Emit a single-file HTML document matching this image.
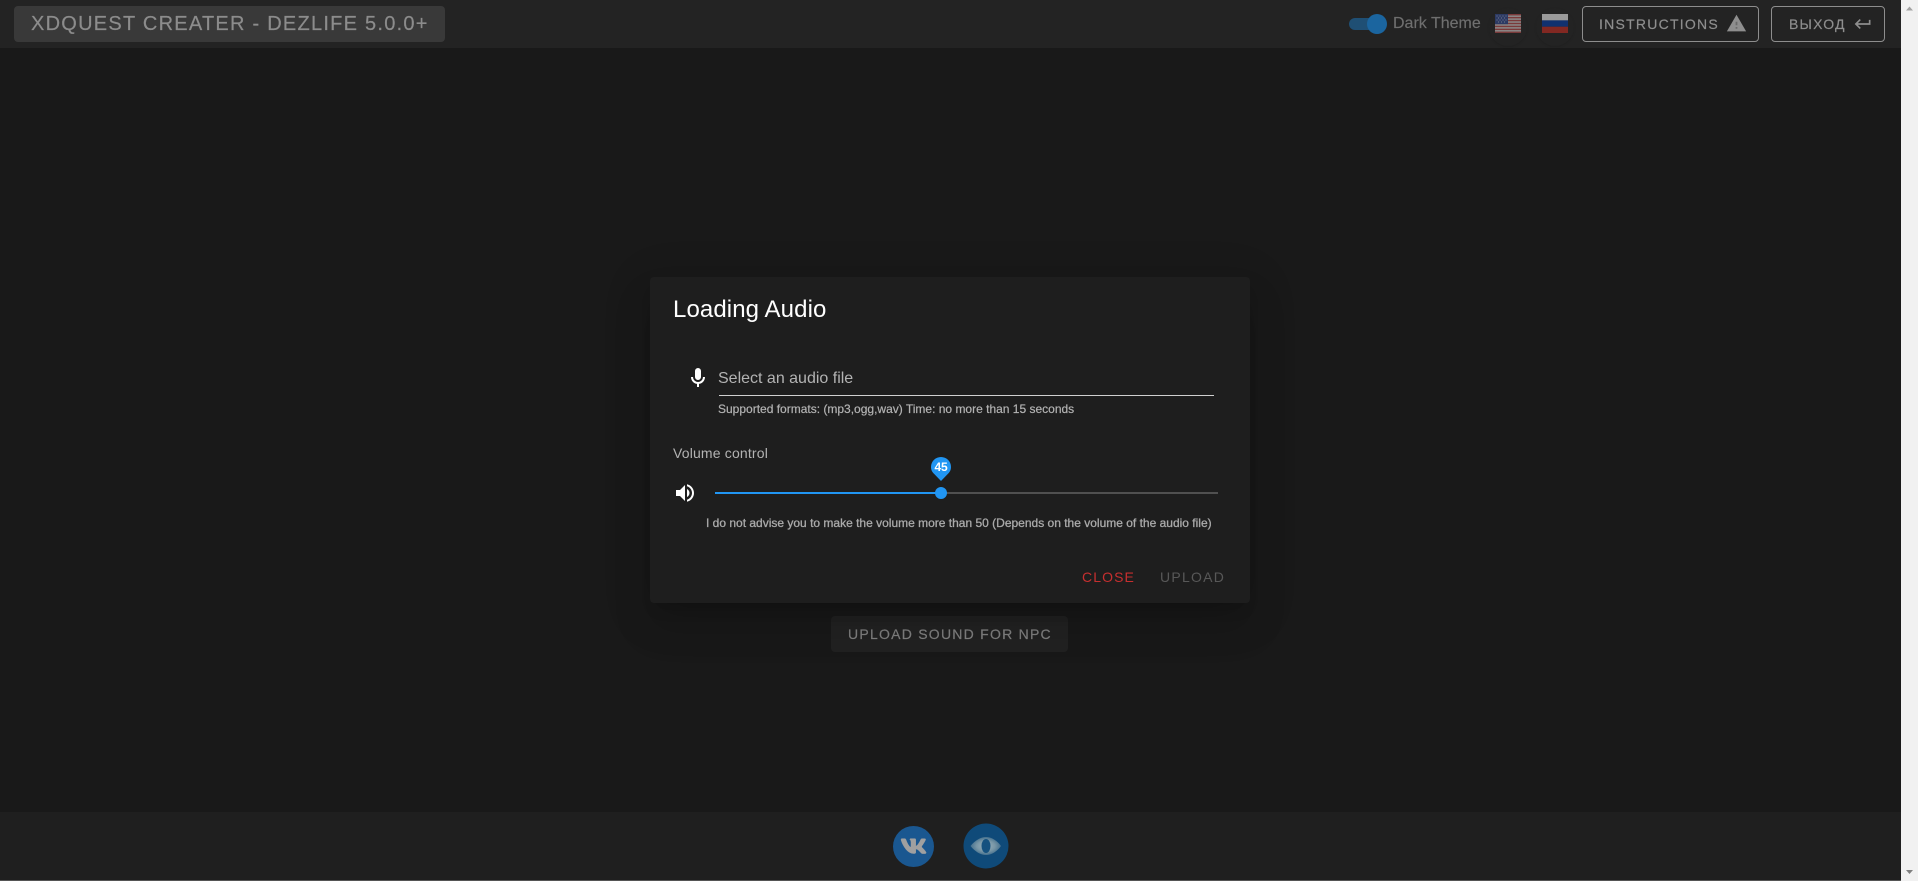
<!DOCTYPE html>
<html lang="en"><head><meta charset="utf-8"><title>XDQuest Creater</title>
<style>
html,body{margin:0;padding:0;width:1918px;height:881px;overflow:hidden;background:#191919;font-family:"Liberation Sans",sans-serif}
.a{position:absolute;white-space:nowrap}
svg{position:absolute;display:block;overflow:visible}
</style></head><body>
<div class="a" style="left:0;top:0;width:1901px;height:48px;background:#232323"></div>
<div class="a" style="left:14px;top:6px;width:431px;height:36px;background:#393939;border-radius:4px"></div>
<div class="a" style="left:31px;top:6px;line-height:36px;font-size:20px;letter-spacing:1.25px;color:#8c8c8c;-webkit-text-stroke:.2px #8c8c8c">XDQUEST CREATER - DEZLIFE 5.0.0+</div>

<div class="a" style="left:1349px;top:18px;width:34px;height:12px;border-radius:6px;background:#1f4f74"></div>
<div class="a" style="left:1367px;top:14px;width:20px;height:20px;border-radius:50%;background:#1b659f"></div>
<div class="a" style="left:1393px;top:14px;line-height:20px;font-size:16px;color:#6f6f6f;-webkit-text-stroke:.15px #6f6f6f">Dark Theme</div>

<div class="a" style="left:1489px;top:8px;width:38px;height:38px;border-radius:50%;box-shadow:0 1px 2px rgba(0,0,0,.12)"></div>
<div class="a" style="left:1536px;top:8px;width:38px;height:38px;border-radius:50%;box-shadow:0 1px 2px rgba(0,0,0,.12)"></div>
<svg style="left:1495px;top:14px" width="26" height="19" viewBox="0 0 26 19">
<rect width="26" height="19" fill="#8b8b8b"/>
<g fill="#7a3a3a"><rect y="0" width="26" height="1.46"/><rect y="2.92" width="26" height="1.46"/><rect y="5.85" width="26" height="1.46"/><rect y="8.77" width="26" height="1.46"/><rect y="11.69" width="26" height="1.46"/><rect y="14.62" width="26" height="1.46"/><rect y="17.54" width="26" height="1.46"/></g>
<rect width="13" height="10.2" fill="#2c3a63"/>
<g fill="#6f7589"><circle cx="2" cy="2" r=".6"/><circle cx="5" cy="2" r=".6"/><circle cx="8" cy="2" r=".6"/><circle cx="11" cy="2" r=".6"/><circle cx="3.5" cy="4" r=".6"/><circle cx="6.5" cy="4" r=".6"/><circle cx="9.5" cy="4" r=".6"/><circle cx="2" cy="6" r=".6"/><circle cx="5" cy="6" r=".6"/><circle cx="8" cy="6" r=".6"/><circle cx="11" cy="6" r=".6"/><circle cx="3.5" cy="8" r=".6"/><circle cx="6.5" cy="8" r=".6"/><circle cx="9.5" cy="8" r=".6"/></g>
</svg>
<svg style="left:1542px;top:14px" width="26" height="19" viewBox="0 0 26 19">
<rect width="26" height="6.4" fill="#9a9a9a"/><rect y="6.4" width="26" height="6.3" fill="#10316f"/><rect y="12.7" width="26" height="6.3" fill="#822822"/>
</svg>

<div class="a" style="left:1582px;top:6px;width:175px;height:34px;border:1px solid #8d8d8d;border-radius:4px"></div>
<div class="a" style="left:1599px;top:6px;line-height:36px;font-size:14px;letter-spacing:1.25px;color:#8e8e8e;-webkit-text-stroke:.2px #8e8e8e">INSTRUCTIONS</div>
<svg style="left:1726px;top:13px" width="21" height="21" viewBox="0 0 24 24"><path fill="#8e8e8e" d="M1,21H23L12,2Z"/><path fill="#6a6a6a" d="M13,14H11V10H13M13,18H11V16H13Z"/></svg>
<div class="a" style="left:1771px;top:6px;width:112px;height:34px;border:1px solid #8d8d8d;border-radius:4px"></div>
<div class="a" style="left:1789px;top:6px;line-height:36px;font-size:14px;letter-spacing:1.2px;color:#8e8e8e;-webkit-text-stroke:.2px #8e8e8e">ВЫХОД</div>
<svg style="left:1853px;top:14px" width="20" height="20" viewBox="0 0 24 24"><path fill="#8e8e8e" d="M19,7V11H5.83L9.41,7.41L8,6L2,12L8,18L9.41,16.58L5.83,13H21V7H19Z"/></svg>

<div class="a" style="left:831px;top:616px;width:237px;height:36px;background:#222;border-radius:4px"></div>
<div class="a" style="left:848px;top:616px;line-height:36px;font-size:14px;letter-spacing:1.25px;color:#808080;-webkit-text-stroke:.2px #808080">UPLOAD SOUND FOR NPC</div>

<div class="a" style="left:650px;top:277px;width:600px;height:326px;background:#1e1e1e;border-radius:4px;box-shadow:0 11px 15px -7px rgba(0,0,0,.16),0 24px 38px 3px rgba(0,0,0,.1),0 9px 46px 8px rgba(0,0,0,.08)"></div>
<div class="a" style="left:673px;top:294px;line-height:32px;font-size:24px;letter-spacing:.1px;color:#fff">Loading Audio</div>
<svg style="left:686px;top:366px" width="24" height="24" viewBox="0 0 24 24"><path fill="#fff" d="M12,2A3,3 0 0,1 15,5V11A3,3 0 0,1 12,14A3,3 0 0,1 9,11V5A3,3 0 0,1 12,2M19,11C19,14.53 16.39,17.44 13,17.93V21H11V17.93C7.61,17.44 5,14.53 5,11H7A5,5 0 0,0 12,16A5,5 0 0,0 17,11H19Z"/></svg>
<div class="a" style="left:718px;top:369px;line-height:20px;font-size:16px;color:#b3b3b3">Select an audio file</div>
<div class="a" style="left:719px;top:395px;width:495px;height:1px;background:#d0d0d0"></div>
<div class="a" style="left:718px;top:401px;line-height:16px;font-size:12px;color:#b3b3b3;-webkit-text-stroke:.2px #b3b3b3">Supported formats: (mp3,ogg,wav) Time: no more than 15 seconds</div>
<div class="a" style="left:673px;top:444px;line-height:18px;font-size:14px;letter-spacing:.17px;color:#b3b3b3">Volume control</div>

<svg style="left:673px;top:481px" width="24" height="24" viewBox="0 0 24 24"><path fill="#fff" d="M14,3.23V5.29C16.89,6.15 19,8.83 19,12C19,15.17 16.89,17.84 14,18.7V20.77C18,19.86 21,16.28 21,12C21,7.72 18,4.14 14,3.23M16.5,12C16.5,10.23 15.5,8.71 14,7.97V16C15.5,15.29 16.5,13.76 16.5,12M3,9V15H7L12,20V4L7,9H3Z"/></svg>
<div class="a" style="left:715px;top:492px;width:503px;height:2px;background:#505050"></div>
<div class="a" style="left:715px;top:492px;width:226px;height:2px;background:#2196f3"></div>
<div class="a" style="left:935px;top:487px;width:12px;height:12px;border-radius:50%;background:#2196f3"></div>
<svg style="left:931px;top:457px" width="20" height="24" viewBox="0 0 20 24"><path fill="#2196f3" d="M10,0A10,10 0 0,1 20,10C20,13 18.8,15 17,16.8L10,24L3,16.8C1.2,15 0,13 0,10A10,10 0 0,1 10,0Z"/></svg>
<div class="a" style="left:931px;top:459px;width:20px;text-align:center;line-height:16px;font-size:12px;font-weight:bold;color:#fff;letter-spacing:-.2px">45</div>
<div class="a" style="left:706px;top:515px;line-height:16px;font-size:12px;color:#aaa;-webkit-text-stroke:.3px #aaa">I do not advise you to make the volume more than 50 (Depends on the volume of the audio file)</div>

<div class="a" style="left:1082px;top:568px;line-height:18px;font-size:14px;letter-spacing:1.1px;color:#c62f2f">CLOSE</div>
<div class="a" style="left:1160px;top:568px;line-height:18px;font-size:14px;letter-spacing:1.25px;color:#585858">UPLOAD</div>

<div class="a" style="left:0;top:812px;width:1901px;height:68px;background:#1f1f1f"></div>
<div class="a" style="left:0;top:880px;width:1901px;height:1px;background:#555"></div>
<div class="a" style="left:893px;top:826px;width:41px;height:41px;border-radius:50%;background:#1a5790"></div>
<svg style="left:890.6px;top:823.3px" width="45.1" height="45.1" viewBox="0 0 24 24"><path fill="#a0a0a0" stroke="#a0a0a0" stroke-width=".25" d="M18.15 16.27H16.69C16.14 16.27 15.97 15.82 15 14.83C14.12 14 13.74 13.88 13.53 13.88C13.24 13.88 13.15 13.96 13.15 14.38V15.69C13.15 16.04 13.04 16.26 12.11 16.26C10.57 16.26 8.86 15.32 7.66 13.59C5.85 11.05 5.36 9.13 5.36 8.75C5.36 8.54 5.43 8.34 5.85 8.34H7.32C7.69 8.34 7.83 8.5 7.97 8.9C8.69 11 9.89 12.8 10.38 12.8C10.57 12.8 10.65 12.71 10.65 12.25V10.1C10.6 9.12 10.07 9.03 10.07 8.68C10.07 8.5 10.21 8.34 10.44 8.34H12.73C13.04 8.34 13.15 8.5 13.15 8.88V11.77C13.15 12.08 13.28 12.19 13.38 12.19C13.56 12.19 13.72 12.08 14.05 11.74C15.1 10.57 15.85 8.76 15.85 8.76C15.95 8.55 16.11 8.35 16.5 8.35H17.93C18.37 8.35 18.47 8.58 18.37 8.89C18.19 9.74 16.41 12.25 16.43 12.25C16.27 12.5 16.21 12.61 16.43 12.9C16.58 13.11 17.09 13.55 17.43 13.94C18.05 14.65 18.53 15.24 18.66 15.65C18.77 16.06 18.57 16.27 18.15 16.27Z"/></svg>
<svg style="left:963px;top:823px" width="46" height="46" viewBox="0 0 46 46">
<defs><radialGradient id="e" cx="50%" cy="50%" r="50%"><stop offset="0" stop-color="#9ab2bd"/><stop offset=".6" stop-color="#7896a6"/><stop offset="1" stop-color="#44708e"/></radialGradient></defs>
<circle cx="23" cy="23" r="22.5" fill="#0f4a79"/>
<path fill="url(#e)" d="M7.5,23C12,17.5 17.5,14 23,14C28.5,14 34,17.5 38,23C34,28.5 28.5,32 23,32C17.5,32 12,28.5 7.5,23Z"/>
<ellipse cx="23" cy="23" rx="4.5" ry="7" fill="#15517f"/>
</svg>

<div class="a" style="left:1901px;top:0;width:17px;height:881px;background:#f1f1f1"></div>
<svg style="left:1901px;top:0" width="17" height="17" viewBox="0 0 17 17"><path fill="#a3a3a3" d="M8.5,6.5L12,10.5H5Z"/></svg>
<svg style="left:1901px;top:864px" width="17" height="17" viewBox="0 0 17 17"><path fill="#7f7f7f" d="M5,6H12L8.5,10Z"/></svg>
</body></html>
